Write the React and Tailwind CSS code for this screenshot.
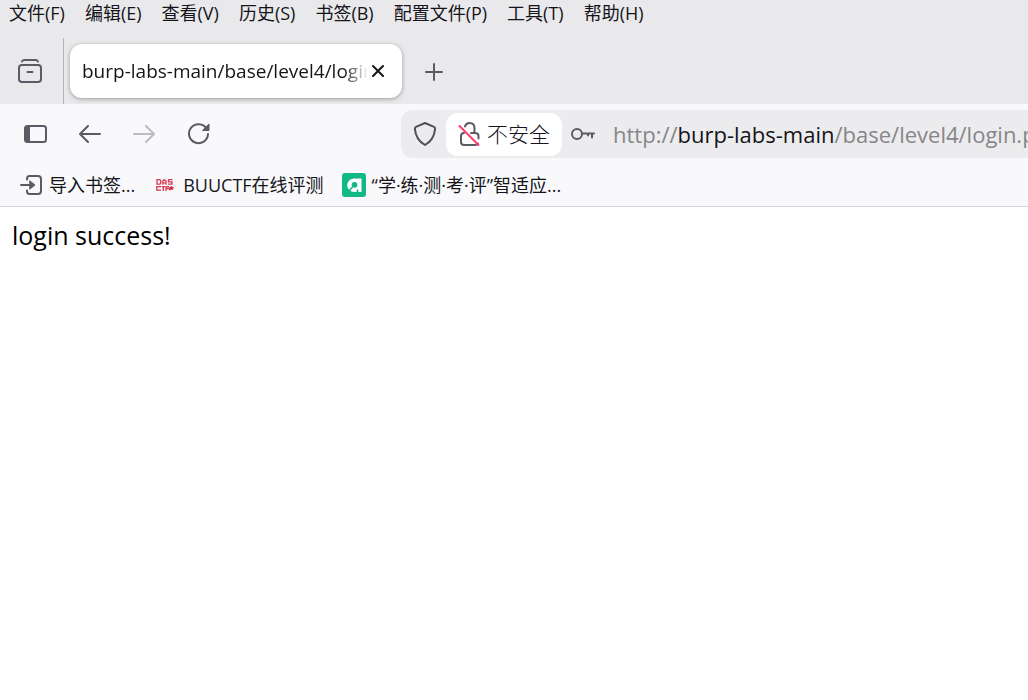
const MENUS = ['文件(F)', '编辑(E)', '查看(V)', '历史(S)', '书签(B)', '配置文件(P)', '工具(T)', '帮助(H)'];

const ArchiveIcon = () => (
  <svg width="26" height="26" viewBox="0 0 26 26" fill="none" stroke="#5b5b66" strokeWidth="2" strokeLinecap="round">
    <path d="M5 3.500C5.400 2.500 6 2 7.500 2h11c1.500 0 2.100.5 2.500 1.500" />
    <rect x="2" y="7" width="22" height="17" rx="3" />
    <path d="M10.500 14h5" />
  </svg>
);

const SidebarIcon = () => (
  <svg width="24" height="20" viewBox="0 0 24 20" fill="none">
    <rect x="2" y="2" width="21" height="16" rx="2.500" stroke="#5b5b66" strokeWidth="2" />
    <path d="M2 2h5v16H2z" fill="#5b5b66" />
  </svg>
);

const ArrowIcon = ({ flip }) => (
  <svg width="22" height="20" viewBox="0 0 22 20" fill="none" stroke={flip ? '#bcbcc0' : '#5b5b66'} strokeWidth="2" strokeLinecap="round" strokeLinejoin="round">
    {flip ? <path d="M1 10h20M13 2l8 8-8 8" /> : <path d="M21 10H1M9 2l-8 8 8 8" />}
  </svg>
);

const ReloadIcon = () => (
  <svg width="24" height="24" viewBox="0 0 24 24" fill="none">
    <path d="M19.500 6.500A9.500 9.500 0 1 0 21 12" stroke="#5b5b66" strokeWidth="2" strokeLinecap="round" />
    <path d="M22 2v6.500h-6.500z" fill="#5b5b66" stroke="#5b5b66" strokeLinejoin="round" />
  </svg>
);

const ShieldIcon = () => (
  <svg width="24" height="26" viewBox="0 0 24 26" fill="none" stroke="#4f4f57" strokeWidth="2" strokeLinejoin="round">
    <path d="M12 2l9 3.800c.9.400 1.200 1 1.100 2C21.500 15 18 20.500 12 24 6 20.500 2.500 15 1.900 7.800c-.1-1 .2-1.600 1.100-2z" />
  </svg>
);

const InsecureIcon = () => (
  <svg width="24" height="26" viewBox="0 0 24 26" fill="none" strokeLinecap="round">
    <path d="M7 5.500C7.700 3.200 9 2 11.500 2c3 0 5 2 5 5v4M6 12c-2.500 0-3 1-3 3v6c0 2 1 3 3 3h11c1.500 0 2.500-.3 3-1.500M13 12h4c2 0 3.500 1 3.500 3v2.500" stroke="#5b5b66" strokeWidth="2" />
    <path d="M1.500 5l19 19" stroke="#ff3b6b" strokeWidth="2" />
  </svg>
);

const KeyIcon = () => (
  <svg width="26" height="16" viewBox="0 0 26 16" fill="none" stroke="#5b5b66" strokeWidth="2" strokeLinecap="round">
    <circle cx="7" cy="8" r="5" />
    <path d="M12 7.500h12M22 7.500v4M18 7.500v2" />
  </svg>
);

const ImportIcon = () => (
  <svg width="24" height="20" viewBox="0 0 24 20" fill="none" stroke="#5b5b66" strokeWidth="2" strokeLinecap="round" strokeLinejoin="round">
    <path d="M8 4.500V4c0-2 1-3 2.500-3H19c2 0 3 1 3 3v12c0 2-1 3-3 3h-8.500C9 19 8 18 8 16v-.5M2 10h9" />
    <path d="M11 6l5 4-5 4z" fill="#5b5b66" strokeWidth="1" />
  </svg>
);

const DasIcon = () => (
  <svg width="24" height="24" viewBox="0 0 24 24" fill="none" stroke="#d8384e" strokeWidth="1.300">
    <path d="M4 6.700h2.200q1.600 0 1.600 2.200T6.200 11.200H4zM9.800 11.700V8l1.500-1.300L13 8v3.700M9.800 9.800H13M19.500 6.700h-4v2.200h3.500v2.300h-4" />
    <path d="M8 13.700H3.800v3.500H8M8.500 13.700h3.500M10.300 13.700v4.300M13 18v-4.300h3M13 15.500h3" />
    <path d="M16 14.500l2.500-1.500 2.500 1.500-1 2-4 1z" fill="#d8384e" stroke="none" />
  </svg>
);

const LearnIcon = () => (
  <svg width="24" height="24" viewBox="0 0 24 24" fill="none">
    <rect width="24" height="24" rx="3" fill="#12b886" />
    <path d="M12 5.500h7.500v13.500H12A6.750 6.750 0 0 1 12 5.500z" fill="#fff" />
    <circle cx="12.500" cy="11.800" r="2.900" fill="#12b886" />
    <path d="M10.500 14L6.500 18.500M15.500 16.500v2.500" stroke="#12b886" strokeWidth="1.600" />
  </svg>
);

const BOOKMARKS = [
  { label: '导入书签...', icon: ImportIcon },
  { label: 'BUUCTF在线评测', icon: DasIcon },
  { label: '“学·练·测·考·评”智适应...', icon: LearnIcon },
];

const App = () => (
  <div className="flex min-h-screen flex-col bg-white font-['Open_Sans','Noto_Sans_CJK_SC',sans-serif] text-lg text-[#15141a]">
    <header className="bg-[#e9e9eb]">
      <nav className="flex h-7 items-start gap-5 overflow-hidden px-[9px] leading-[26px]">
        {MENUS.map((name) => (
          <button key={name} className="shrink-0 whitespace-nowrap">{name}</button>
        ))}
      </nav>
      <div className="flex h-[76px] items-end">
        <div className="flex h-[66px] w-16 shrink-0 items-center justify-center border-r border-[#b4b4b6] pr-1">
          <button aria-label="最近浏览"><ArchiveIcon /></button>
        </div>
        <div className="mb-1.5 ml-1.5 flex h-[54px] w-[332px] shrink-0 items-center rounded-xl bg-white pl-3 pr-3.5 shadow-[0_1px_4px_rgba(0,0,0,0.35)]">
          <span className="min-w-0 flex-1 overflow-hidden whitespace-nowrap text-[19px] leading-7 [mask-image:linear-gradient(to_left,transparent,black_24px)]">
            burp-labs-main/base/level4/login.php
          </span>
          <button aria-label="关闭标签页" className="flex h-5 w-5 items-center justify-center">
            <svg width="12" height="12" viewBox="0 0 12 12" stroke="#15141a" strokeWidth="2" strokeLinecap="round">
              <path d="M1 1l10 10M11 1L1 11" />
            </svg>
          </button>
        </div>
        <button aria-label="新建标签页" className="mb-[22px] ml-[22px] flex h-5 w-5 items-center justify-center">
          <svg width="20" height="20" viewBox="0 0 20 20" stroke="#5b5b66" strokeWidth="2" strokeLinecap="round">
            <path d="M10 2v16M2 10h16" />
          </svg>
        </button>
      </div>
    </header>

    <div className="border-b border-[#d6d6d9] bg-[#f9f9fb]">
      <div className="flex h-[60px] items-center overflow-hidden">
        <div className="flex w-[401px] shrink-0 items-center gap-8 pl-[23px]">
          <button aria-label="侧栏"><SidebarIcon /></button>
          <button aria-label="后退"><ArrowIcon /></button>
          <button aria-label="前进"><ArrowIcon flip /></button>
          <button aria-label="刷新"><ReloadIcon /></button>
        </div>
        <div className="flex h-12 min-w-0 flex-1 items-center rounded-l-xl bg-[#ececee] pl-3">
          <button aria-label="跟踪保护" className="shrink-0"><ShieldIcon /></button>
          <button className="ml-[9px] flex h-[43px] w-[116px] shrink-0 items-center gap-[5px] rounded-xl bg-white pl-3 text-[21px] font-light">
            <InsecureIcon />
            不安全
          </button>
          <button aria-label="密码" className="ml-2 shrink-0"><KeyIcon /></button>
          <div
            role="textbox"
            aria-label="地址"
            contentEditable
            suppressContentEditableWarning
            spellCheck={false}
            className="ml-[17px] min-w-0 flex-1 overflow-hidden whitespace-nowrap text-[22px] leading-8 text-[#868689] outline-none"
          >
            http://<span className="text-[#15141a]">burp-labs-main</span>/base/level4/login.php
          </div>
        </div>
      </div>
      <div className="flex h-[42px] items-center gap-[18px] overflow-hidden pl-[19px]">
        {BOOKMARKS.map(({ label, icon: Icon }) => (
          <a key={label} href="#" className="flex shrink-0 items-center gap-1.5 whitespace-nowrap">
            <Icon />
            {label}
          </a>
        ))}
      </div>
    </div>

    <main className="px-3 py-2 text-[25px] leading-10 text-black">login success!</main>
  </div>
);

export default App;
